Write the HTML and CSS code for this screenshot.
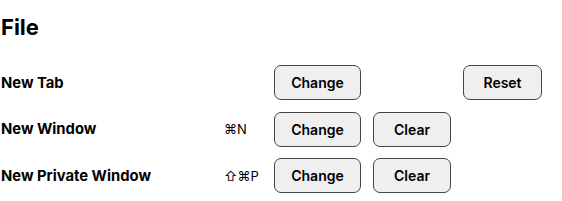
FILE: index.html
```html
<!DOCTYPE html>
<html>
<head>
    <title>Shortcuts</title>
    <link rel="stylesheet" href="styles.css">
</head>
<body>
    <div class="section">
        <h1>File</h1>
        <div class="keys">
            <span class="label">New Tab</span>
            <span class="combo"></span>
            <button>Change</button>
            <span></span>
            <button>Reset</button>

            <span class="label">New Window</span>
            <span class="combo">⌘N</span>
            <button>Change</button>
            <button>Clear</button>
            <span></span>

            <span class="label">New Private Window</span>
            <span class="combo">⇧⌘P</span>
            <button>Change</button>
            <button>Clear</button>
            <span></span>
        </div>
    </div>
</body>
</html>
```
FILE: styles.css
```css
* { margin: 0; padding: 0; box-sizing: border-box; }
body { font: 14px Inter, "Noto Sans", sans-serif; background: #fff; color: #000; }
.section { padding: 13px 0 0 1px; }
h1 { font-size: 22px; font-weight: 700; line-height: 28px; margin-bottom: 24px; }
.keys { display: grid; grid-template-columns: 211px 38px 87px 78px 79px; column-gap: 12px; row-gap: 11.5px; align-items: center; }
.label { font-weight: 700; font-size: 14.8px; }
.combo { font-size: 13px; }
button { font: 600 14px Inter, sans-serif; height: 35px; background: #efefef; color: #000; border: 1px solid #444; border-radius: 7px; }
```
